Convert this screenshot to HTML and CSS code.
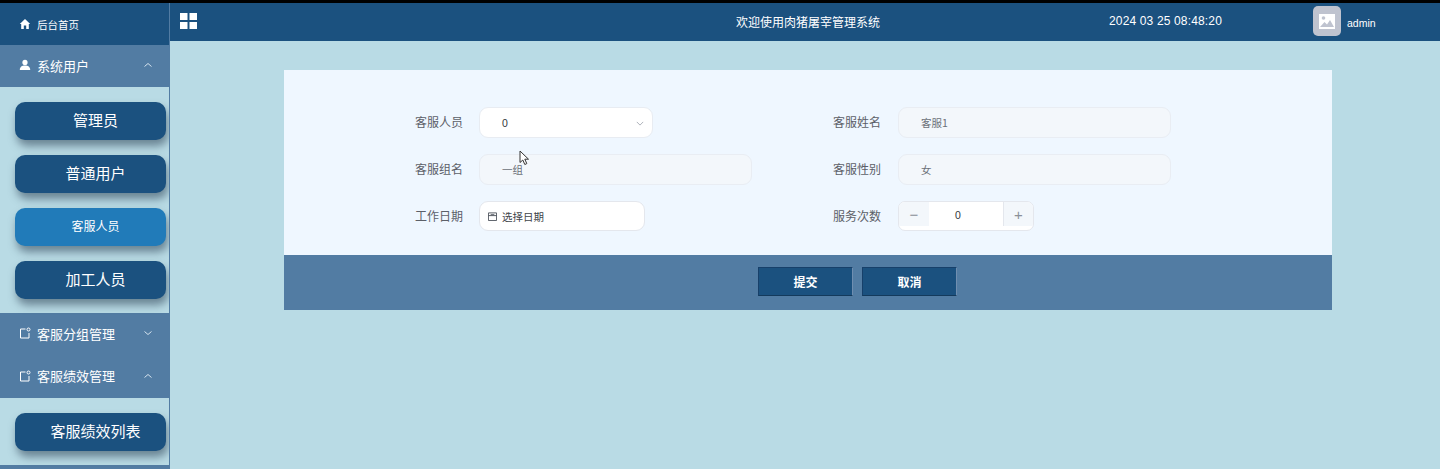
FILE: index.html
```html
<!DOCTYPE html>
<html lang="zh">
<head>
<meta charset="utf-8">
<title>肉猪屠宰管理系统</title>
<link rel="stylesheet" href="styles.css">
</head>
<body>
<div class="app">
  <aside class="sidebar">
    <div class="menu-item home">
      <svg class="mi" viewBox="0 0 12 12"><path d="M6 1 .8 6h1.400v5h2.600V7.600h2.400V11h2.600V6h1.400z" fill="#fff"/></svg>
      <span class="small">后台首页</span>
    </div>
    <div class="menu-item group">
      <svg class="mi" viewBox="0 0 12 12"><circle cx="6" cy="3.400" r="2.600" fill="#fff"/><path d="M.8 11c0-3 2.200-4.400 5.200-4.400s5.200 1.400 5.200 4.400z" fill="#fff"/></svg>
      <span>系统用户</span>
      <svg class="chev" viewBox="0 0 10 6"><path d="M1.500 4.500 5 1.500l3.500 3"/></svg>
    </div>
    <div class="submenu">
      <a class="sub-btn">管理员</a>
      <a class="sub-btn">普通用户</a>
      <a class="sub-btn active">客服人员</a>
      <a class="sub-btn">加工人员</a>
    </div>
    <div class="menu-item group">
      <svg class="mi" viewBox="0 0 12 12"><path d="M6.500 2H1.500v9h8.500V6" class="line"/><circle cx="9.500" cy="2.500" r="1.500" class="line"/></svg>
      <span>客服分组管理</span>
      <svg class="chev" viewBox="0 0 10 6"><path d="M1.500 1.500 5 4.500l3.500-3"/></svg>
    </div>
    <div class="menu-item group">
      <svg class="mi" viewBox="0 0 12 12"><path d="M6.500 2H1.500v9h8.500V6" class="line"/><circle cx="9.500" cy="2.500" r="1.500" class="line"/></svg>
      <span>客服绩效管理</span>
      <svg class="chev" viewBox="0 0 10 6"><path d="M1.500 4.500 5 1.500l3.500 3"/></svg>
    </div>
    <div class="submenu">
      <a class="sub-btn">客服绩效列表</a>
    </div>
    <div class="menu-item group"></div>
  </aside>
  <div class="content">
    <header class="topbar">
      <svg class="grid-icon" viewBox="0 0 17 16"><path d="M0 0h7.500v7H0zM9.500 0H17v7H9.500zM0 9h7.500v7H0zM9.500 9H17v7H9.500z" fill="#fff"/></svg>
      <div class="title">欢迎使用肉猪屠宰管理系统</div>
      <div class="clock">2024 03 25 08:48:20</div>
      <div class="avatar">
        <svg viewBox="0 0 16 15"><path d="M0 0h16v15H0z" fill="#fff"/><circle cx="4.500" cy="4" r="1.800" fill="#bfc3cf"/><path d="M1 13 5.500 8l2.500 2.500L11 6l4 7z" fill="#bfc3cf"/></svg>
      </div>
      <div class="user">admin</div>
    </header>
    <main class="main">
      <section class="card">
        <form class="form">
          <div class="row">
            <label class="lbl">客服人员</label>
            <div class="field select">0
              <svg class="sel-chev" viewBox="0 0 10 6"><path d="M1 1l4 4 4-4"/></svg>
            </div>
          </div>
          <div class="row">
            <label class="lbl">客服姓名</label>
            <div class="field disabled">客服1</div>
          </div>
          <div class="row">
            <label class="lbl">客服组名</label>
            <div class="field disabled">一组</div>
          </div>
          <div class="row">
            <label class="lbl">客服性别</label>
            <div class="field disabled">女</div>
          </div>
          <div class="row">
            <label class="lbl">工作日期</label>
            <div class="field date">
              <svg class="cal" viewBox="0 0 10 10"><path d="M.5 1h9v8.500h-9zM.5 4h9M3 3h4"/></svg>选择日期
            </div>
          </div>
          <div class="row">
            <label class="lbl">服务次数</label>
            <div class="number">
              <span class="step">−</span>
              <span class="num">0</span>
              <span class="step plus">+</span>
            </div>
          </div>
        </form>
        <div class="actions">
          <button type="button" class="btn">提交</button>
          <button type="button" class="btn">取消</button>
        </div>
      </section>
    </main>
  </div>
</div>
<svg class="cursor" viewBox="0 0 11 16"><path d="M1 1v11.500l2.800-2.500 2 4.500 2-.9-2-4.400h3.700z" fill="#fff" stroke="#333" stroke-width="1"/></svg>
</body>
</html>
```
FILE: styles.css
```css
* { box-sizing: border-box; }
html, body { margin: 0; height: 100%; overflow: hidden; }
body {
  font-family: "Noto Sans CJK SC", "Liberation Sans", sans-serif;
  background: #b9dbe5;
  border-top: 3px solid #000;
  position: relative;
}
.app { display: flex; height: 466px; }
.sidebar {
  width: 170px;
  flex: none;
  background: #b9dbe5;
  border-right: 1px solid #527ca3;
  color: #fff;
  overflow: hidden;
}
.menu-item {
  display: flex;
  align-items: center;
  height: 42px;
  padding: 0 0 2px 19px;
  font-size: 13px;
  color: #fff;
}
.submenu ~ .menu-item { height: 42.5px; }
.home { background: #1b517f; padding-bottom: 0; }
.group { background: #527ca3; }
.small { font-size: 10.5px; }
.mi { width: 12px; height: 12px; margin-right: 6px; flex: none; }
.line { fill: none; stroke: #fff; stroke-width: 1; }
.chev {
  width: 10px;
  height: 6px;
  margin-left: auto;
  margin-right: 16px;
  fill: none;
  stroke: #d5e3ee;
  stroke-width: 1;
}
.submenu {
  display: flex;
  flex-direction: column;
  gap: 15.4px;
  padding: 15px 3px 14.4px 15px;
}
.sub-btn {
  display: block;
  height: 37.6px;
  line-height: 36px;
  border-radius: 10px;
  background: #1b517f;
  box-shadow: 2px 6px 8px rgba(40, 60, 80, .55);
  color: #fff;
  font-size: 15px;
  text-align: center;
  padding-left: 10px;
}
.sub-btn.active { background: #217bb9; font-size: 12px; }
.content { flex: 1; min-width: 0; display: flex; flex-direction: column; }
.topbar {
  height: 38px;
  flex: none;
  background: #1b517f;
  display: flex;
  align-items: center;
  color: #fff;
  padding-left: 10px;
}
.grid-icon { width: 17px; height: 16px; margin-top: -3px; flex: none; }
.title {
  width: 310px;
  margin-left: 456px;
  text-align: center;
  font-size: 12px;
  margin-top: -2px;
  white-space: nowrap;
}
.clock {
  margin-left: 146px;
  font: 12px "Liberation Sans", sans-serif;
  width: 204px;
  letter-spacing: .15px;
  margin-top: -2px;
}
.avatar {
  width: 28px;
  height: 30px;
  border-radius: 5px;
  background: #bfc3cf;
  display: flex;
  align-items: center;
  justify-content: center;
  margin-top: -2px;
}
.avatar svg { width: 16px; height: 15px; }
.user { font: 10.5px "Liberation Sans", sans-serif; margin-left: 6px; margin-top: 1px; }
.main { flex: 1; padding: 29px 108px 0 114px; }
.card { width: 1048px; }
.form {
  background: #eff7ff;
  height: 185px;
  padding-top: 37px;
  display: grid;
  grid-template-columns: 418px 1fr;
  grid-auto-rows: 31px;
  row-gap: 16px;
  align-content: start;
}
.row { display: flex; align-items: center; gap: 16px; }
.row:nth-child(even) .lbl { margin-right: 1px; }
.lbl {
  width: 179px;
  flex: none;
  text-align: right;
  font-size: 12px;
  color: #5c6068;
  padding-bottom: 2px;
}
.field {
  height: 31px;
  width: 273px;
  flex: none;
  border-radius: 9px;
  border: 1px solid #e4e7ed;
  background: #fff;
  display: flex;
  align-items: center;
  padding-left: 22px;
  font-size: 10.5px;
  color: #33363c;
  position: relative;
}
.select { width: 174px; border-color: #e8ecf2; font: 10.5px "Liberation Sans", sans-serif; }
.sel-chev {
  position: absolute;
  right: 8px;
  top: 13px;
  width: 8px;
  height: 5px;
  fill: none;
  stroke: #9aa0aa;
  stroke-width: 1;
}
.disabled { background: #f3f7fb; border-color: #e9edf3; color: #6b7078; }
.date { width: 166px; height: 30px; padding-left: 8px; color: #40444a; align-self: flex-start; }
.cal { width: 9px; height: 9px; margin-right: 5px; fill: none; stroke: #4a4f58; stroke-width: 1; }
.number {
  width: 136px;
  height: 30px;
  flex: none;
  align-self: flex-start;
  display: flex;
  border: 1px solid #e4e7ed;
  border-radius: 7px;
  background: #fff;
  overflow: hidden;
  font: 10.5px "Liberation Sans", sans-serif;
  color: #33363c;
}
.step {
  width: 30px;
  height: 24px;
  flex: none;
  background: #f3f7fb;
  color: #8b9099;
  font-size: 15px;
  display: flex;
  align-items: center;
  justify-content: center;
}
.plus { border-left: 1px solid #e4e7ed; }
.num { flex: 1; text-align: center; line-height: 27px; padding-right: 16px; }
.actions {
  height: 55px;
  background: #527ca3;
  display: flex;
  justify-content: center;
  gap: 9px;
  padding: 12px 0 0 99px;
}
.btn {
  width: 95px;
  height: 29px;
  padding: 0;
  background: #1b517f;
  border: 1px solid #17406a;
  border-right-color: #6f8eb0;
  border-bottom-color: #143a5c;
  color: #fff;
  font-family: inherit;
  font-size: 12px;
  font-weight: 700;
}
.cursor { position: absolute; left: 519px; top: 147px; width: 11px; height: 16px; }
```
